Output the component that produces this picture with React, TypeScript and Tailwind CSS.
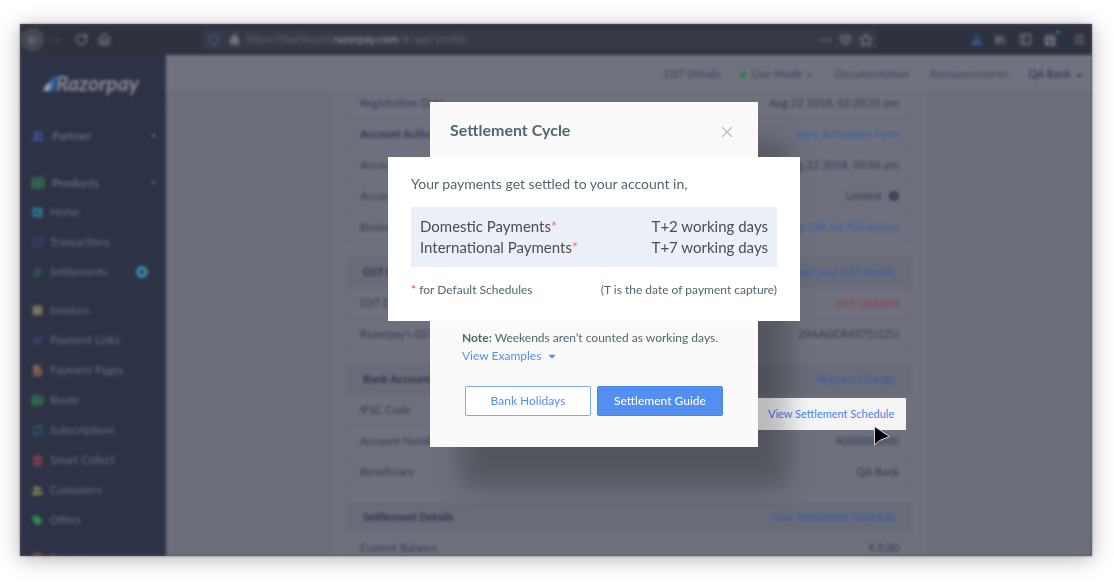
import type { ReactNode } from "react";
import {
  ArrowLeft,
  ArrowRight,
  Ellipsis,
  House,
  Library,
  Lock,
  Menu,
  PanelLeft,
  RotateCw,
  Shield,
  Star,
  X,
} from "lucide-react";
import {
  FaArrowsRotate,
  FaCaretDown,
  FaCheckDouble,
  FaCircleDot,
  FaCircleQuestion,
  FaDownload,
  FaFileLines,
  FaGetPocket,
  FaGift,
  FaLink,
  FaRepeat,
  FaSquare,
  FaSquarePollVertical,
  FaTableCellsLarge,
  FaTableList,
  FaTag,
  FaTrashCan,
  FaUserGroup,
} from "react-icons/fa6";

interface NavItem {
  label: string;
  icon: ReactNode;
  badge?: boolean;
}

interface Row {
  label: string;
  value: string;
  tone?: "link" | "danger";
  strong?: boolean;
  help?: boolean;
}

interface Section {
  title?: string;
  action?: string;
  rows: Row[];
}

const groups: NavItem[] = [
  { label: "Partner", icon: <FaUserGroup className="text-[#3a5a9a]" /> },
  { label: "Products", icon: <FaTableCellsLarge className="text-[#2f8d5a]" /> },
];

const mainNav: NavItem[] = [
  { label: "Home", icon: <FaSquarePollVertical className="text-[#2f7c98]" /> },
  { label: "Transactions", icon: <FaArrowsRotate className="text-[#374d80]" /> },
  { label: "Settlements", icon: <FaCheckDouble className="text-[#2c8050]" />, badge: true },
];

const productNav: NavItem[] = [
  { label: "Invoices", icon: <FaSquare className="text-[#78745a]" /> },
  { label: "Payment Links", icon: <FaLink className="text-[#3b508c]" /> },
  { label: "Payment Pages", icon: <FaFileLines className="text-[#90684f]" /> },
  { label: "Route", icon: <FaTableList className="text-[#2a8a4c]" /> },
  { label: "Subscriptions", icon: <FaRepeat className="text-[#286c90]" /> },
  { label: "Smart Collect", icon: <FaTrashCan className="text-[#90404f]" /> },
  { label: "Customers", icon: <FaUserGroup className="text-[#89864f]" /> },
  { label: "Offers", icon: <FaTag className="text-[#2a9252]" /> },
];

const sections: Section[] = [
  {
    rows: [
      { label: "Registration Date", value: "Aug 22 2018, 02:20:31 pm" },
      { label: "Account Activation", value: "View Activation Form", tone: "link", strong: true },
      { label: "Account Activated", value: "Aug 22 2018, 03:04 pm" },
      { label: "Account Access", value: "Limited", help: true },
      { label: "Business", value: "App URL for Full Access", tone: "link" },
    ],
  },
  {
    title: "GST Details",
    action: "Add your GST details",
    rows: [
      { label: "GST Details", value: "Not Updated", tone: "danger" },
      { label: "Razorpay's GST", value: "29AAGCR4375J1ZU" },
    ],
  },
  {
    title: "Bank Account",
    action: "Request Change",
    rows: [
      { label: "IFSC Code", value: "" },
      { label: "Account Number", value: "4000000000" },
      { label: "Beneficiary", value: "QA Bank" },
    ],
  },
  {
    title: "Settlement Details",
    action: "View Settlement Schedule",
    rows: [{ label: "Current Balance", value: "₹ 0.00" }],
  },
];

function BrowserBar() {
  return (
    <div className="flex h-[31px] shrink-0 items-center bg-[#2e323e] text-[#6c717e]">
      <span className="ml-px flex size-[23px] items-center justify-center rounded-full bg-[#454954]">
        <ArrowLeft size={14} strokeWidth={3} />
      </span>
      <ArrowRight size={12} className="ml-[7px] text-[#474c58]" />
      <RotateCw size={13} strokeWidth={3} className="ml-3" />
      <House size={13} strokeWidth={3} className="ml-[10px]" />
      <div className="mr-[94px] ml-[92px] flex h-[21px] flex-1 items-center rounded-sm bg-[#363a47] px-1 text-[11px]">
        <Shield size={12} strokeWidth={3} className="ml-px text-[#4b5495]" />
        <Lock size={11} strokeWidth={3} fill="currentColor" className="ml-[9px]" />
        <span className="ml-[6px] text-[#5c6170]">
          https://dashboard.<b className="font-semibold text-[#858a96]">razorpay.com</b>/#/app/profile
        </span>
        <div className="ml-auto flex items-center gap-[7px]">
          <Ellipsis size={14} strokeWidth={3} />
          <FaGetPocket size={13} className="text-[#5c616d]" />
          <Star size={14} strokeWidth={3} />
        </div>
      </div>
      <div className="mr-[6px] flex items-center gap-3">
        <FaDownload size={11} className="text-[#345da0]" />
        <Library size={13} strokeWidth={3} />
        <PanelLeft size={13} strokeWidth={3} />
        <span className="relative">
          <FaGift size={12} />
          <span className="absolute -top-1 -right-1 size-1 rounded-full bg-[#1d80a0]" />
        </span>
        <Menu size={13} strokeWidth={3} className="ml-[5px]" />
      </div>
    </div>
  );
}

function NavLink({ item }: { item: NavItem }) {
  return (
    <a href="#" className="flex h-[30px] items-center pl-3 text-[11px] text-[#686c7e]">
      <span className="flex w-[18px] text-[11px]">{item.icon}</span>
      {item.label}
      {item.badge && <FaCircleDot className="mr-[18px] ml-auto size-3 text-[#348fa8]" />}
    </a>
  );
}

function Sidebar() {
  return (
    <aside className="w-[146px] shrink-0 overflow-hidden bg-[#2e3246]">
      <a href="#" className="flex h-[53px] items-center border-b border-[#363b4d] pt-1 pl-[22px]" aria-label="Razorpay">
        <svg viewBox="0 0 18 19" className="h-[19px] w-[18px]">
          <path d="M1 17 L4 11 L10 7 L8 17 Z" fill="#a3a6b1" />
          <path d="M8 6 L16 1 L12 17 H7 L10 7 L7 10 Z" fill="#2b67a8" />
        </svg>
        <span className="-ml-1 text-[21px] font-bold text-[#858895] italic">Razorpay</span>
      </a>
      <div className="pt-1">
        {groups.map((group) => (
          <a
            key={group.label}
            href="#"
            className="flex h-[47px] items-center pr-[9px] pl-3 text-[12px] text-[#727686]"
          >
            <span className="flex w-5 text-[12px]">{group.icon}</span>
            {group.label}
            <FaCaretDown className="ml-auto size-[7px]" />
          </a>
        ))}
      </div>
      <nav className="-mt-[9px]">
        {mainNav.map((item) => (
          <NavLink key={item.label} item={item} />
        ))}
      </nav>
      <nav className="mt-2">
        {productNav.map((item) => (
          <NavLink key={item.label} item={item} />
        ))}
      </nav>
      <nav className="mt-2">
        <NavLink item={{ label: "Reports", icon: <FaGift className="text-[#c85c66]" /> }} />
      </nav>
    </aside>
  );
}

function TopNav() {
  return (
    <header className="flex h-[39px] shrink-0 items-center justify-end border-b border-[#656874] bg-[#70737f] pt-px pr-[9px] text-[11px] text-[#3e4257]">
      <a href="#">GST Details</a>
      <a href="#" className="ml-5 flex items-center">
        <span className="mr-[5px] size-[6px] rounded-full bg-[#208044]" />
        Live Mode
        <FaCaretDown className="ml-1 size-2" />
      </a>
      <a href="#" className="ml-5">Documentation</a>
      <a href="#" className="ml-5">Announcements</a>
      <a href="#" className="ml-5 flex items-center text-[#2a2e48]">
        QA Bank
        <FaCaretDown className="ml-1 size-2" />
      </a>
    </header>
  );
}

function DetailRow({ row }: { row: Row }) {
  const tone =
    row.tone === "link" ? "text-[#3759a6]" : row.tone === "danger" ? "text-[#933c50]" : "text-[#373b50]";

  return (
    <div className="flex h-[31px] items-center justify-between border-b border-[#696c78] pr-3 pl-[13px] text-[11px]">
      <span className={row.strong ? "font-bold text-[#343850]" : "text-[#373b50]"}>{row.label}</span>
      <span className={`flex items-center gap-2 ${tone}`}>
        {row.value}
        {row.help && <FaCircleQuestion className="size-[10px]" />}
      </span>
    </div>
  );
}

function Profile() {
  return (
    <main className="min-h-0 flex-1 overflow-hidden bg-[#6b6e7a]">
      <div className="mx-auto -mt-[6px] flex max-w-[596px] flex-col gap-[14px] bg-[#6e717d] px-[15px]">
        {sections.map((section, index) => (
          <section key={index} className="border-x border-[#696c78]">
            {section.title && (
              <div className="flex h-[31px] items-center justify-between bg-[#696c78] px-4 text-[11px]">
                <h2 className="font-bold text-[#303448]">{section.title}</h2>
                <a href="#" className="text-[#3759a6]">
                  {section.action}
                </a>
              </div>
            )}
            {section.rows.map((row) => (
              <DetailRow key={row.label} row={row} />
            ))}
          </section>
        ))}
      </div>
    </main>
  );
}

function SettlementDialog() {
  return (
    <div
      role="dialog"
      aria-labelledby="dialog-title"
      className="absolute top-[78px] left-[410px] w-[328px] bg-[#fafafa] pb-[31px] text-[#51666e] shadow-[30px_40px_24px_rgba(0,0,0,0.24)]"
    >
      <div className="flex h-[55px] items-center justify-between pr-[22px] pl-5">
        <h1 id="dialog-title" className="text-[16px] font-bold">
          Settlement Cycle
        </h1>
        <button aria-label="Close" className="pt-1 text-[#c3c3c3]">
          <X size={18} strokeWidth={2} />
        </button>
      </div>

      <div className="-mx-[42px] bg-white px-[23px] pt-[17px] pb-[21px]">
        <p className="text-[14px] leading-5">Your payments get settled to your account in,</p>
        <table className="mt-[13px] w-full bg-[#ebeff7] text-[15px] leading-[21px] text-[#4d4d4d]">
          <tbody>
            <tr>
              <th scope="row" className="pt-[9px] pl-[9px] text-left font-normal">
                Domestic Payments<span className="text-[#ff6b6b]">*</span>
              </th>
              <td className="pt-[9px] pr-[9px] text-right">T+2 working days</td>
            </tr>
            <tr>
              <th scope="row" className="pb-[9px] pl-[9px] text-left font-normal">
                International Payments<span className="text-[#ff6b6b]">*</span>
              </th>
              <td className="pr-[9px] pb-[9px] text-right">T+7 working days</td>
            </tr>
          </tbody>
        </table>
        <div className="mt-[13px] flex justify-between text-[12px] leading-5">
          <span>
            <span className="text-[#f03e3e]">*</span> for Default Schedules
          </span>
          <span>(T is the date of payment capture)</span>
        </div>
      </div>

      <div className="px-8 pt-2 text-[12px] leading-[18px]">
        <p>
          <b>Note:</b> Weekends aren’t counted as working days.
        </p>
        <button className="flex items-center gap-[6px] text-[#528ff0]">
          View Examples
          <FaCaretDown size={10} />
        </button>
      </div>

      <div className="mt-[21px] flex gap-[6px] px-[35px] text-[12px]">
        <button className="h-[30px] flex-1 rounded-xs border border-[#7aa9f5] bg-white text-[#528ff0]">
          Bank Holidays
        </button>
        <button className="h-[30px] flex-1 rounded-xs border border-[#4686ee] bg-[#528ff0] font-medium text-white">
          Settlement Guide
        </button>
      </div>
    </div>
  );
}

export default function App() {
  return (
    <div className="flex h-screen bg-white pt-6 pr-[22px] pb-[26px] pl-5 font-['Lato',sans-serif]">
      <div className="relative min-w-0 flex-1 shadow-[0_3px_20px_rgba(0,0,0,0.3),0_0_2px_rgba(0,0,0,0.5)]">
        <div className="h-full overflow-hidden bg-[#5a5d69]">
          <div className="h-full blur-[1px]">
            <div className="flex h-full flex-col blur-[1px]">
              <BrowserBar />
              <div className="flex min-h-0 flex-1">
                <Sidebar />
                <div className="flex min-w-0 flex-1 flex-col">
                  <TopNav />
                  <Profile />
                </div>
              </div>
            </div>
          </div>
        </div>

        <a
          href="#"
          className="absolute top-[374px] left-[738px] flex h-8 items-center bg-[#f5f5f5] pr-3 pl-[10px] text-[11px] whitespace-nowrap text-[#3d84f5]"
        >
          View Settlement Schedule
        </a>
        <SettlementDialog />
        <svg viewBox="0 0 18 22" className="absolute top-[401px] left-[853px] h-[22px] w-[18px]">
          <path d="M1.5 1.5 V20 L6.5 15.5 L16.5 11.5 Z" fill="#000" stroke="#d8d8dc" strokeWidth="1" />
        </svg>
      </div>
    </div>
  );
}
